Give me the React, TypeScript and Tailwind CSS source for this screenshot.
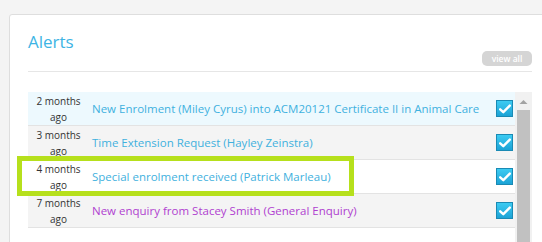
import React from "react";

const rows = [
  { time: ["2 months", "ago"], text: "New Enrolment (Miley Cyrus) into ACM20121 Certificate II in Animal Care", bg: "bg-[#edf9fe]", color: "text-[#3fb1de]" },
  { time: ["3 months", "ago"], text: "Time Extension Request (Hayley Zeinstra)", bg: "bg-[#f4f4f4]", color: "text-[#3fb1de]" },
  { time: ["4 months", "ago"], text: "Special enrolment received (Patrick Marleau)", bg: "bg-white", color: "text-[#3fb1de]" },
  { time: ["7 months", "ago"], text: "New enquiry from Stacey Smith (General Enquiry)", bg: "bg-[#f4f4f4]", color: "text-[#b03fd0]" },
];

function Check() {
  return (
    <div className="w-[17px] h-[17px] border border-[#1a8ab4] bg-gradient-to-b from-[#3ccbf2] to-[#1ba3d6] flex items-center justify-center shrink-0">
      <svg width="12" height="10" viewBox="0 0 12 10">
        <path d="M1.2 5.3 L4.3 8.2 L10.8 1.6" fill="none" stroke="#fff" strokeWidth="2.4" strokeLinecap="round" strokeLinejoin="round" />
      </svg>
    </div>
  );
}

export default function App() {
  return (
    <div
      className="relative w-[542px] h-[242px] overflow-hidden bg-[#f4f4f4]"
      style={{ fontFamily: '"Open Sans", "Liberation Sans", sans-serif' }}
    >
      <div className="ml-[9px] mt-[14px] w-[570px] h-[300px] bg-white border border-[#dedede] rounded-[3px] pl-[18px]">
        <div className="w-[504px]">
          <div className="flex justify-between h-[57px] border-b border-[#e6e6e6]">
            <div className="self-start mt-[15px] text-[17px] leading-[24px] text-[#3db4e4]">Alerts</div>
            <div className="self-end mb-[5px] w-[50px] h-[15px] rounded-[5px] bg-[#d5d5d5] text-white text-[8.5px] font-semibold leading-[15px] text-center">
              view all
            </div>
          </div>
          <div className="flex mt-[20px]">
            <div className="w-[487px]">
              {rows.map((r, i) => (
                <div key={i} className={`flex items-center h-[34px] border-b border-[#e3e3e3] ${r.bg}`}>
                  <div className="w-[61px] shrink-0 text-center text-[10px] leading-[16px] text-[#333]">
                    <div>{r.time[0]}</div>
                    <div>{r.time[1]}</div>
                  </div>
                  <div className={`pl-[3px] text-[11.5px] whitespace-nowrap ${r.color}`}>{r.text}</div>
                  <div className="ml-auto mr-[2px]">
                    <Check />
                  </div>
                </div>
              ))}
            </div>
            <div className="w-[17px] h-[200px] bg-[#f1f1f1] flex flex-col items-center">
              <svg width="9" height="6" viewBox="0 0 9 6" className="mt-[7px]">
                <path d="M0.5 5 L4.5 1 L8.5 5 Z" fill="#a3a3a3" />
              </svg>
              <div className="mt-[5px] w-[13px] h-[180px] bg-[#c1c1c1]" />
            </div>
          </div>
        </div>
      </div>
      <div className="absolute left-[17px] top-[156px] w-[337px] h-[40px] border-[5px] border-[#b6e01c]" />
    </div>
  );
}
